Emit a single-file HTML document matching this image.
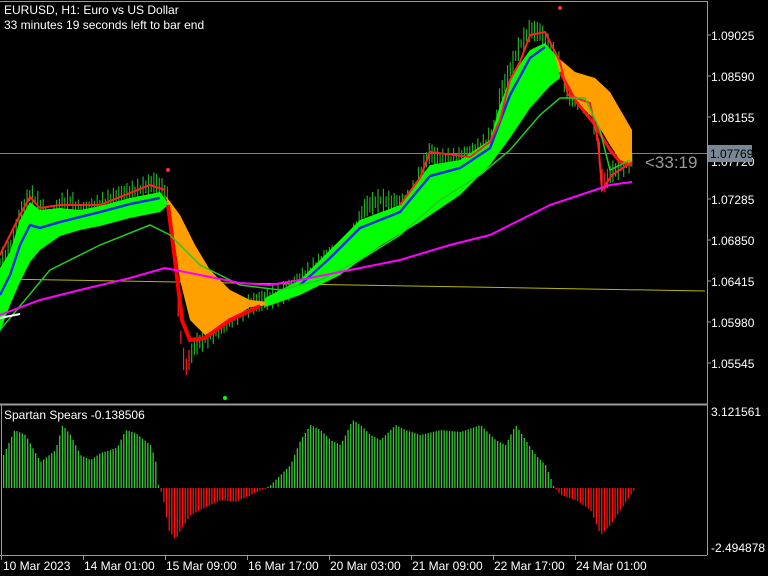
<!DOCTYPE html>
<html><head><meta charset="utf-8"><style>
html,body{margin:0;padding:0;background:#000;width:768px;height:576px;overflow:hidden}
svg{display:block}
text{font-family:"Liberation Sans",sans-serif}
</style></head><body>
<svg id="s" width="768" height="576" viewBox="0 0 768 576">
<rect width="768" height="576" fill="#000"/>
<line x1="0" y1="1.5" x2="707" y2="1.5" stroke="#9a9a9a"/>
<line x1="707.5" y1="1" x2="707.5" y2="555" stroke="#9a9a9a"/>
<line x1="0" y1="404.5" x2="707" y2="404.5" stroke="#9a9a9a" stroke-width="2"/>
<line x1="0" y1="555.5" x2="707" y2="555.5" stroke="#9a9a9a"/>
<line x1="1.5" y1="404" x2="1.5" y2="555" stroke="#9a9a9a"/>
<line x1="0" y1="153.5" x2="707" y2="153.5" stroke="#808080"/>
<line x1="0" y1="279" x2="705" y2="291" stroke="#b8b800"/>
<g id="main"></g>
<g fill="#fff" font-size="12">
<text x="711" y="40">1.09025</text>
<text x="711" y="81">1.08590</text>
<text x="711" y="122">1.08155</text>
<text x="711" y="204">1.07285</text>
<text x="711" y="245">1.06850</text>
<text x="711" y="286">1.06415</text>
<text x="711" y="327">1.05980</text>
<text x="711" y="368">1.05545</text>
<text x="711" y="416">3.121561</text>
<text x="711" y="552">-2.494878</text>
</g>
<g stroke="#9a9a9a">
<line x1="707" y1="35" x2="711" y2="35"/><line x1="707" y1="76" x2="711" y2="76"/>
<line x1="707" y1="117" x2="711" y2="117"/><line x1="707" y1="199" x2="711" y2="199"/>
<line x1="707" y1="240" x2="711" y2="240"/><line x1="707" y1="281" x2="711" y2="281"/>
<line x1="707" y1="322" x2="711" y2="322"/><line x1="707" y1="363" x2="711" y2="363"/>
</g>
<text x="711" y="166" fill="#fff" font-size="12">1.07720</text>
<rect x="708" y="145" width="44" height="17" fill="#7a8896"/>
<text x="710" y="158" fill="#000" font-size="12">1.07769</text>
<text x="645" y="168" fill="#9a9a9a" font-size="17">&lt;33:19</text>
<g stroke="#9a9a9a">
<line x1="1.5" y1="555" x2="1.5" y2="560"/><line x1="83.5" y1="555" x2="83.5" y2="560"/>
<line x1="165.5" y1="555" x2="165.5" y2="560"/><line x1="247.5" y1="555" x2="247.5" y2="560"/>
<line x1="329.5" y1="555" x2="329.5" y2="560"/><line x1="411.5" y1="555" x2="411.5" y2="560"/>
<line x1="493.5" y1="555" x2="493.5" y2="560"/><line x1="575.5" y1="555" x2="575.5" y2="560"/>
</g>
<g fill="#fff" font-size="12">
<text x="3" y="570">10 Mar 2023</text>
<text x="84" y="570">14 Mar 01:00</text>
<text x="166" y="570">15 Mar 09:00</text>
<text x="248" y="570">16 Mar 17:00</text>
<text x="330" y="570">20 Mar 03:00</text>
<text x="412" y="570">21 Mar 09:00</text>
<text x="494" y="570">22 Mar 17:00</text>
<text x="576" y="570">24 Mar 01:00</text>
</g>
<g fill="#fff" font-size="12">
<text x="4" y="14">EURUSD, H1:  Euro vs US Dollar</text>
<text x="4" y="29">33 minutes 19 seconds left to bar end</text>
<text x="4" y="419">Spartan Spears -0.138506</text>
</g>
<g id="hist"></g>
</svg>
<script>
var NS="http://www.w3.org/2000/svg";
function el(p,t,a){var e=document.createElementNS(NS,t);for(var k in a)e.setAttribute(k,a[k]);p.appendChild(e);return e;}
function pts(a){return a.map(function(p){return p[0]+","+p[1]}).join(" ");}
function interp(a,x){for(var i=0;i<a.length-1;i++){if(x>=a[i][0]&&x<=a[i+1][0]){var t=(x-a[i][0])/(a[i+1][0]-a[i][0]);return a[i][1]+t*(a[i+1][1]-a[i][1]);}}return a[a.length-1][1];}
var m=document.getElementById("main");
var price=[[0,262],[10,250],[20,215],[30,195],[40,205],[50,222],[60,205],[70,200],[80,213],[90,210],[100,205],[120,196],[140,190],[155,182],[165,192],[170,205],[175,260],[180,330],[185,370],[195,345],[210,335],[230,318],[250,305],[270,298],[290,290],[310,272],[330,256],[345,254],[355,232],[365,207],[380,200],[400,205],[410,200],[420,175],[430,152],[440,160],[455,160],[470,155],[485,145],[495,130],[500,95],[510,70],[520,45],[530,30],[540,32],[550,48],[560,65],[568,95],[580,100],[590,105],[598,140],[603,185],[612,172],[632,160]];
var c=el(m,"g",{});
for(var x=0;x<632;x+=2.7){var y=interp(price,x);var h=6+Math.abs(Math.sin(x*1.7))*14;var col=(x>165&&x<190)||(x>595&&x<610)?"#ff2020":"#22aa22";el(c,"line",{x1:x,y1:y-h*0.6,x2:x,y2:y+h*0.6,stroke:col,"stroke-width":1.2});}
var gUp1=[[0,268],[10,252],[20,220],[30,202],[40,210],[60,208],[80,210],[100,206],[130,198],[160,192],[168,203]];
var gLo1=[[168,205],[160,212],[130,218],[100,226],[80,230],[60,236],[40,250],[30,262],[20,282],[10,305],[0,332]];
el(m,"polygon",{points:pts(gUp1.concat(gLo1)),fill:"#00ff00"});
el(m,"polyline",{points:pts([[0,295],[10,275],[20,245],[30,225],[40,228],[60,222],[100,212],[130,204],[160,198]]),fill:"none",stroke:"#1030e0","stroke-width":2.5});
var oT=[[165,195],[180,215],[195,245],[210,270],[230,290],[250,300],[270,302]];
var oB=[[270,305],[250,307],[230,320],[205,335],[190,320],[180,280],[170,210]];
el(m,"polygon",{points:pts(oT.concat(oB)),fill:"#ffa000"});
el(m,"polyline",{points:pts([[168,205],[175,260],[182,320],[190,340],[205,338],[230,320],[260,306]]),fill:"none",stroke:"#ff0000","stroke-width":4});
var g2U=[[265,298],[300,280],[330,250],[360,220],[400,205],[430,165],[460,160],[490,140],[500,105],[510,78],[530,50],[545,43],[560,60]];
var g2L=[[560,78],[550,86],[530,108],[510,138],[490,165],[460,195],[420,222],[380,246],[340,275],[300,295],[265,307]];
el(m,"polygon",{points:pts(g2U.concat(g2L)),fill:"#00ff00"});
el(m,"polyline",{points:pts([[300,285],[330,258],[360,228],[400,212],[430,176],[460,168],[490,148],[510,95],[530,58],[545,47]]),fill:"none",stroke:"#1030e0","stroke-width":2.5});
var o2T=[[555,55],[575,72],[595,78],[610,92],[632,130]];
var o2B=[[632,165],[620,160],[610,145],[595,120],[575,100],[560,75]];
el(m,"polygon",{points:pts(o2T.concat(o2B)),fill:"#ffa000"});
el(m,"polyline",{points:pts([[560,72],[575,100],[595,125],[610,150],[620,162],[632,165]]),fill:"none",stroke:"#ff1010","stroke-width":3});
el(m,"polyline",{points:pts([[0,255],[20,215],[30,197],[40,208],[60,205],[100,205],[150,185],[165,190]]),fill:"none",stroke:"#ff2020","stroke-width":2});
el(m,"polyline",{points:pts([[400,205],[420,178],[430,152],[470,157],[490,142],[500,120],[510,80],[520,62],[530,35],[545,32],[560,62],[568,95],[590,103],[598,140],[602,190],[612,175],[632,162]]),fill:"none",stroke:"#ff2020","stroke-width":2});
el(m,"polyline",{points:pts([[0,330],[50,270],[100,245],[150,225],[170,235],[200,265],[240,285],[280,290],[320,280],[360,260],[400,235],[440,200],[480,175],[510,150],[540,115],[560,98],[585,98],[600,130],[610,170],[630,160]]),fill:"none",stroke:"#22cc22","stroke-width":1.5});
el(m,"polyline",{points:pts([[0,315],[40,300],[80,290],[130,278],[165,268],[200,275],[240,283],[270,285],[300,280],[350,270],[400,260],[450,245],[490,235],[520,220],[550,205],[580,195],[610,185],[632,182]]),fill:"none",stroke:"#ff00ff","stroke-width":2});
el(m,"polyline",{points:pts([[0,318],[20,314]]),fill:"none",stroke:"#fff","stroke-width":2});
el(m,"circle",{cx:168,cy:170,r:2,fill:"#ff3030"});
el(m,"circle",{cx:560,cy:8,r:2,fill:"#ff3030"});
el(m,"circle",{cx:225,cy:398,r:2,fill:"#00ff00"});
var H=[[3,455],[14,430],[25,435],[40,462],[55,450],[62,425],[70,435],[80,455],[90,460],[100,453],[110,450],[117,447],[125,430],[135,433],[150,445],[155,460],[158,486],[162,495],[168,530],[175,540],[180,530],[190,515],[200,510],[220,500],[235,502],[250,495],[265,488],[270,485],[280,475],[290,465],[300,440],[310,425],[320,430],[330,440],[340,445],[345,435],[352,420],[360,425],[370,435],[380,440],[395,425],[405,430],[420,435],[440,430],[460,432],[480,425],[495,440],[505,445],[515,425],[525,440],[535,455],[545,465],[553,486],[560,495],[575,500],[590,510],[600,535],[610,525],[620,510],[630,495],[635,488]];
var hg=document.getElementById("hist");
for(var x=3;x<=635;x+=2.67){var y=interp(H,x);var col=y<488?"#32c832":"#ff1010";el(hg,"rect",{x:x,y:Math.min(y,488),width:1.3,height:Math.max(1,Math.abs(y-488)),fill:col});}
</script>
</body></html>
